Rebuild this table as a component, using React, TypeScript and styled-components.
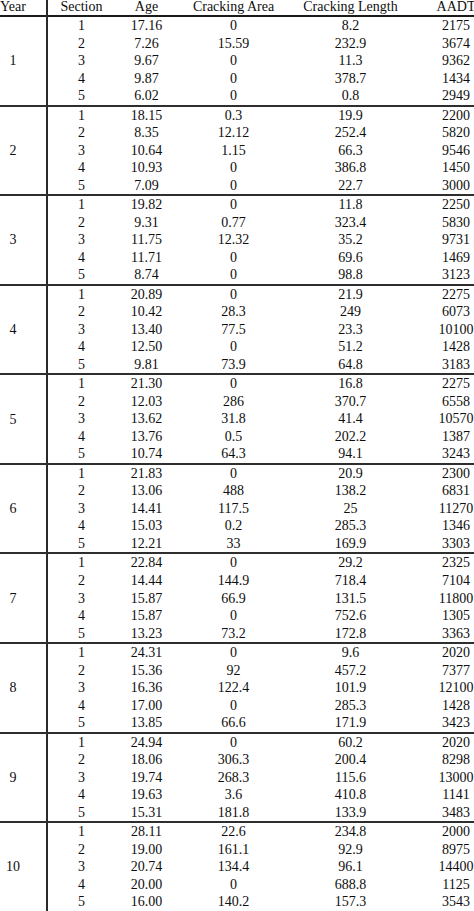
import React from "react";
import styled, { createGlobalStyle } from "styled-components";

const GlobalStyle = createGlobalStyle`
  html, body {
    margin: 0;
    padding: 0;
    background: #ffffff;
  }
  body {
    width: 474px;
    height: 911px;
    overflow: hidden;
    font-family: "Liberation Serif", "Times New Roman", serif;
    color: #0e0e0e;
  }
`;

const COLS = "68px 67px 63px 111px 123px 88px";
const ROW_H = 17.52;

const Frame = styled.div`
  width: 474px;
  height: 911px;
  overflow: hidden;
`;

const Table = styled.div`
  width: 520px;
  margin-left: -20px;
  display: flex;
  flex-direction: column;
`;

const HeaderRow = styled.div`
  display: grid;
  grid-template-columns: ${COLS};
  height: 17px;
  box-sizing: border-box;
  border-bottom: 2px solid #1a1a1a;
`;

const HeadCell = styled.div<{ $divider?: boolean }>`
  box-sizing: border-box;
  font-size: 14px;
  line-height: 11px;
  padding-top: 1px;
  padding-bottom: 3px;
  text-align: center;
  white-space: nowrap;
  border-right: ${(p) => (p.$divider ? "2px solid #2a2a2a" : "none")};
  margin-bottom: -2px;
`;

const Group = styled.div<{ $last?: boolean }>`
  display: grid;
  grid-template-columns: ${COLS};
  grid-template-rows: repeat(5, ${ROW_H}px);
  border-bottom: ${(p) => (p.$last ? "none" : "2px solid #2e2e2e")};
`;

const YearCell = styled.div`
  grid-column: 1;
  grid-row: 1 / span 5;
  box-sizing: border-box;
  border-right: 2px solid #2a2a2a;
  display: flex;
  align-items: center;
  justify-content: center;
  font-size: 14px;
  padding-top: 1px;
`;

const Cell = styled.div`
  font-size: 14px;
  line-height: ${ROW_H}px;
  text-align: center;
  white-space: nowrap;
`;

type Row = [number, string, string, string, number];

const data: Row[][] = [
  [
    [1, "17.16", "0", "8.2", 2175],
    [2, "7.26", "15.59", "232.9", 3674],
    [3, "9.67", "0", "11.3", 9362],
    [4, "9.87", "0", "378.7", 1434],
    [5, "6.02", "0", "0.8", 2949],
  ],
  [
    [1, "18.15", "0.3", "19.9", 2200],
    [2, "8.35", "12.12", "252.4", 5820],
    [3, "10.64", "1.15", "66.3", 9546],
    [4, "10.93", "0", "386.8", 1450],
    [5, "7.09", "0", "22.7", 3000],
  ],
  [
    [1, "19.82", "0", "11.8", 2250],
    [2, "9.31", "0.77", "323.4", 5830],
    [3, "11.75", "12.32", "35.2", 9731],
    [4, "11.71", "0", "69.6", 1469],
    [5, "8.74", "0", "98.8", 3123],
  ],
  [
    [1, "20.89", "0", "21.9", 2275],
    [2, "10.42", "28.3", "249", 6073],
    [3, "13.40", "77.5", "23.3", 10100],
    [4, "12.50", "0", "51.2", 1428],
    [5, "9.81", "73.9", "64.8", 3183],
  ],
  [
    [1, "21.30", "0", "16.8", 2275],
    [2, "12.03", "286", "370.7", 6558],
    [3, "13.62", "31.8", "41.4", 10570],
    [4, "13.76", "0.5", "202.2", 1387],
    [5, "10.74", "64.3", "94.1", 3243],
  ],
  [
    [1, "21.83", "0", "20.9", 2300],
    [2, "13.06", "488", "138.2", 6831],
    [3, "14.41", "117.5", "25", 11270],
    [4, "15.03", "0.2", "285.3", 1346],
    [5, "12.21", "33", "169.9", 3303],
  ],
  [
    [1, "22.84", "0", "29.2", 2325],
    [2, "14.44", "144.9", "718.4", 7104],
    [3, "15.87", "66.9", "131.5", 11800],
    [4, "15.87", "0", "752.6", 1305],
    [5, "13.23", "73.2", "172.8", 3363],
  ],
  [
    [1, "24.31", "0", "9.6", 2020],
    [2, "15.36", "92", "457.2", 7377],
    [3, "16.36", "122.4", "101.9", 12100],
    [4, "17.00", "0", "285.3", 1428],
    [5, "13.85", "66.6", "171.9", 3423],
  ],
  [
    [1, "24.94", "0", "60.2", 2020],
    [2, "18.06", "306.3", "200.4", 8298],
    [3, "19.74", "268.3", "115.6", 13000],
    [4, "19.63", "3.6", "410.8", 1141],
    [5, "15.31", "181.8", "133.9", 3483],
  ],
  [
    [1, "28.11", "22.6", "234.8", 2000],
    [2, "19.00", "161.1", "92.9", 8975],
    [3, "20.74", "134.4", "96.1", 14400],
    [4, "20.00", "0", "688.8", 1125],
    [5, "16.00", "140.2", "157.3", 3543],
  ],
];

export default function App() {
  return (
    <>
      <GlobalStyle />
      <Frame>
        <Table>
          <HeaderRow>
            <HeadCell $divider>Year</HeadCell>
            <HeadCell>Section</HeadCell>
            <HeadCell>Age</HeadCell>
            <HeadCell>Cracking Area</HeadCell>
            <HeadCell>Cracking Length</HeadCell>
            <HeadCell>AADT</HeadCell>
          </HeaderRow>
          {data.map((rows, gi) => (
            <Group key={gi} $last={gi === data.length - 1}>
              <YearCell>{gi + 1}</YearCell>
              {rows.map((r) => (
                <React.Fragment key={r[0]}>
                  <Cell>{r[0]}</Cell>
                  <Cell>{r[1]}</Cell>
                  <Cell>{r[2]}</Cell>
                  <Cell>{r[3]}</Cell>
                  <Cell>{r[4]}</Cell>
                </React.Fragment>
              ))}
            </Group>
          ))}
        </Table>
      </Frame>
    </>
  );
}
